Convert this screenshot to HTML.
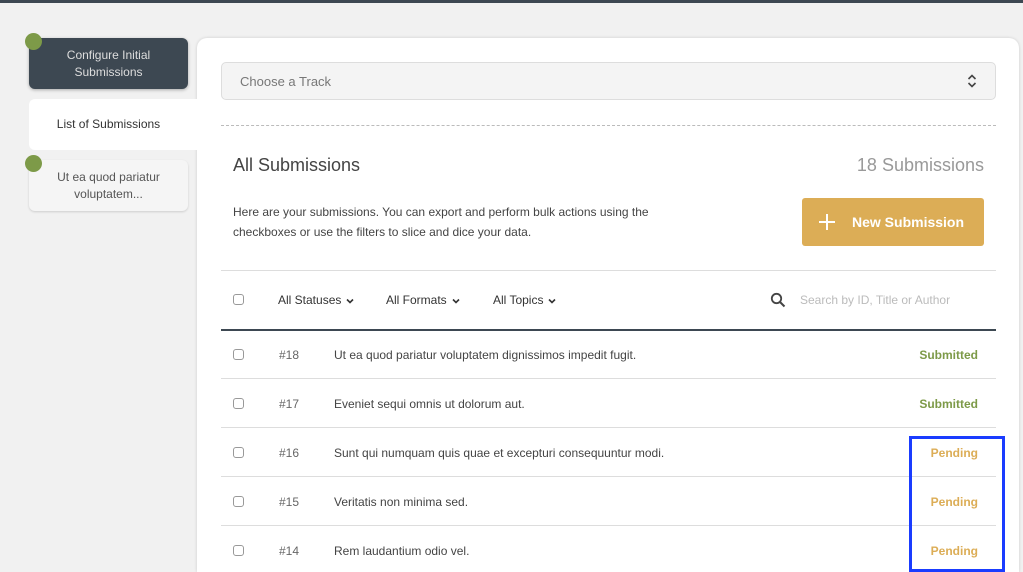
<!DOCTYPE html>
<html><head><style>
*{box-sizing:border-box;margin:0;padding:0}
html,body{width:1023px;height:572px;overflow:hidden}
body{background:#f1f1f1;font-family:"Liberation Sans",sans-serif;position:relative}
.top{position:absolute;left:0;top:0;width:1023px;height:3px;background:#3d4852}
.tab{position:absolute;left:29px;width:159px;border-radius:6px;font-size:12px;text-align:center;line-height:17px}
.dot{position:absolute;left:25px;width:17px;height:17px;border-radius:50%;background:#7d9a48}
.card{position:absolute;left:197px;top:38px;width:822px;height:534px;background:#fff;border-radius:10px 10px 0 0;box-shadow:0 0 3px rgba(0,0,0,.15)}
.abs{position:absolute}
.cb{position:absolute;width:11px;height:11px;border:1px solid #999;border-radius:3px;background:#fff}
.row{position:absolute;left:24px;width:775px;height:49px;border-bottom:1px solid #ddd;font-size:12px;color:#444}
.row span{position:absolute;top:18px}
.st{right:18px;font-weight:bold}
.chev{display:inline-block;vertical-align:middle;margin-left:5px}
</style></head><body>
<div class="top"></div>
<div class="tab" style="top:38px;height:51px;background:#3d4852;color:#ddd;padding-top:9px;box-shadow:0 1px 3px rgba(0,0,0,.3)">Configure Initial<br>Submissions</div>
<div class="dot" style="top:33px"></div>
<div class="tab" style="top:99px;height:51px;width:175px;background:#fff;color:#333;padding-top:17px;border-radius:6px 0 0 6px;z-index:2;padding-right:16px">List of Submissions</div>
<div class="tab" style="top:160px;height:51px;background:#f5f5f5;color:#555;padding-top:9px;box-shadow:0 1px 2px rgba(0,0,0,.15)">Ut ea quod pariatur<br>voluptatem...</div>
<div class="dot" style="top:155px"></div>
<div class="card">
 <div class="abs" style="left:24px;top:24px;width:775px;height:38px;background:#f4f4f4;border:1px solid #ddd;border-radius:5px;font-size:13px;color:#777;padding:11px 18px">Choose a Track<svg style="position:absolute;right:18px;top:11px" width="10" height="14" viewBox="0 0 10 14"><path d="M1.5 5L5 1.5 8.5 5M1.5 9L5 12.5 8.5 9" fill="none" stroke="#444" stroke-width="1.6"/></svg></div>
 <div class="abs" style="left:24px;top:87px;width:775px;border-top:1px dashed #bbb"></div>
 <div class="abs" style="left:36px;top:117px;font-size:18px;color:#444">All Submissions</div>
 <div class="abs" style="right:35px;top:117px;font-size:18px;color:#999">18 Submissions</div>
 <div class="abs" style="left:36px;top:164px;font-size:12px;color:#444;line-height:20px;width:460px">Here are your submissions. You can export and perform bulk actions using the checkboxes or use the filters to slice and dice your data.</div>
 <div class="abs" style="left:605px;top:160px;width:182px;height:48px;background:#dcad56;border-radius:3px;color:#fff;font-size:14px;font-weight:bold;padding:16px 0 0 50px"><svg style="position:absolute;left:17px;top:16px" width="16" height="16" viewBox="0 0 16 16"><path d="M8 0v16M0 8h16" stroke="#fff" stroke-width="2"/></svg>New Submission</div>
 <div class="abs" style="left:24px;top:232px;width:775px;border-top:1px solid #ddd"></div>
 <div class="cb" style="left:36px;top:256px"></div>
 <div class="abs" style="left:81px;top:255px;font-size:12px;color:#333">All Statuses<svg class="chev" width="8" height="6" viewBox="0 0 8 6"><path d="M1 1.5l3 3 3-3" fill="none" stroke="#333" stroke-width="1.6"/></svg></div>
 <div class="abs" style="left:189px;top:255px;font-size:12px;color:#333">All Formats<svg class="chev" width="8" height="6" viewBox="0 0 8 6"><path d="M1 1.5l3 3 3-3" fill="none" stroke="#333" stroke-width="1.6"/></svg></div>
 <div class="abs" style="left:296px;top:255px;font-size:12px;color:#333">All Topics<svg class="chev" width="8" height="6" viewBox="0 0 8 6"><path d="M1 1.5l3 3 3-3" fill="none" stroke="#333" stroke-width="1.6"/></svg></div>
 <svg class="abs" style="left:573px;top:254px" width="16" height="16" viewBox="0 0 16 16"><circle cx="6.5" cy="6.5" r="4.7" fill="none" stroke="#444" stroke-width="1.8"/><path d="M10 10l4.5 4.5" stroke="#444" stroke-width="2"/></svg>
 <div class="abs" style="left:603px;top:255px;font-size:12px;color:#bbb">Search by ID, Title or Author</div>
 <div class="abs" style="left:24px;top:291px;width:775px;height:2px;background:#3d4852"></div>
 <div class="row" style="top:292px"><div class="cb" style="left:12px;top:19px"></div><span style="left:58px;color:#666">#18</span><span style="left:113px">Ut ea quod pariatur voluptatem dignissimos impedit fugit.</span><span class="st" style="color:#7d9a48">Submitted</span></div>
 <div class="row" style="top:341px"><div class="cb" style="left:12px;top:19px"></div><span style="left:58px;color:#666">#17</span><span style="left:113px">Eveniet sequi omnis ut dolorum aut.</span><span class="st" style="color:#7d9a48">Submitted</span></div>
 <div class="row" style="top:390px"><div class="cb" style="left:12px;top:19px"></div><span style="left:58px;color:#666">#16</span><span style="left:113px">Sunt qui numquam quis quae et excepturi consequuntur modi.</span><span class="st" style="color:#dcad56">Pending</span></div>
 <div class="row" style="top:439px"><div class="cb" style="left:12px;top:19px"></div><span style="left:58px;color:#666">#15</span><span style="left:113px">Veritatis non minima sed.</span><span class="st" style="color:#dcad56">Pending</span></div>
 <div class="row" style="top:488px"><div class="cb" style="left:12px;top:19px"></div><span style="left:58px;color:#666">#14</span><span style="left:113px">Rem laudantium odio vel.</span><span class="st" style="color:#dcad56">Pending</span></div>
</div>
<div class="abs" style="left:909px;top:436px;width:96px;height:136px;border:3px solid #1a3cff"></div>
</body></html>
